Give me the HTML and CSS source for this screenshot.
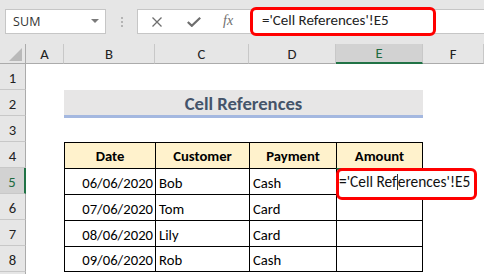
FILE: index.html
```html
<!DOCTYPE html>
<html>
<head>
<meta charset="utf-8">
<link rel="stylesheet" href="styles.css">
</head>
<body>
<div class="app">
  <div class="toolbar">
    <div class="namebox">
      <span class="name">SUM</span>
      <span class="dropdown"></span>
    </div>
    <div class="grip"><i></i><i></i><i></i></div>
    <div class="fbar">
      <div class="fbtns">
        <svg class="ic" width="12" height="10" viewBox="0 0 12 10"><path d="M1.5 0.5 L10.5 9.5 M10.5 0.5 L1.5 9.5" stroke="#6e6e6e" stroke-width="1.3" fill="none"/></svg>
        <svg class="ic" width="14" height="10" viewBox="0 0 14 10"><path d="M0.8 5 L4.8 8.8 L13.2 0.8" stroke="#6e6e6e" stroke-width="2.2" fill="none"/></svg>
        <span class="fx">fx</span>
      </div>
      <div class="finput"><span class="ftext">='Cell References'!E5</span></div>
    </div>
  </div>
  <div class="sheet">
    <div class="corner"><span class="tri"></span></div>
    <div class="ch">A</div><div class="ch">B</div><div class="ch">C</div><div class="ch">D</div><div class="ch sel">E</div><div class="ch">F</div>

    <div class="rh">1</div><div></div><div></div><div></div><div></div><div></div><div></div>

    <div class="rh">2</div><div></div><div class="title">Cell References</div><div></div>

    <div class="rh">3</div><div></div><div></div><div></div><div></div><div></div><div></div>

    <div class="rh">4</div><div></div>
    <div class="tc th first">Date</div><div class="tc th">Customer</div><div class="tc th">Payment</div><div class="tc th last">Amount</div><div></div>

    <div class="rh sel">5</div><div></div>
    <div class="tc num first">06/06/2020</div><div class="tc">Bob</div><div class="tc">Cash</div>
    <div class="tc last active"><span class="edit">='Cell Ref<span class="caret"></span>erences'!E5</span></div><div></div>

    <div class="rh">6</div><div></div>
    <div class="tc num first">07/06/2020</div><div class="tc">Tom</div><div class="tc">Card</div><div class="tc last"></div><div></div>

    <div class="rh">7</div><div></div>
    <div class="tc num first">08/06/2020</div><div class="tc">Lily</div><div class="tc">Card</div><div class="tc last"></div><div></div>

    <div class="rh">8</div><div></div>
    <div class="tc num first bot">09/06/2020</div><div class="tc bot">Rob</div><div class="tc bot">Cash</div><div class="tc last bot"></div><div></div>

    <div class="rh"></div><div></div><div></div><div></div><div></div><div></div><div></div>
  </div>
</div>
</body>
</html>
```
FILE: styles.css
```css
* { box-sizing: border-box; }
html, body { margin: 0; padding: 0; }
body {
  width: 484px;
  height: 274px;
  overflow: hidden;
  background: #ffffff;
  font-family: Carlito, Calibri, Lato, sans-serif;
  font-size: 14.67px;
  color: #000;
}
.app { width: 484px; height: 274px; overflow: hidden; }

.toolbar {
  height: 44px;
  background: #e6e6e6;
  display: flex;
  align-items: flex-start;
  padding: 9px 0 0 5px;
}
.namebox {
  width: 101px;
  height: 25px;
  background: #fff;
  border: 1px solid #c6c6c6;
  display: flex;
  align-items: center;
  justify-content: space-between;
  padding: 0 6px 0 7px;
}
.name {
  font-family: "Open Sans", "Noto Sans", sans-serif;
  font-size: 12.5px;
  color: #333;
  letter-spacing: 0.1px;
}
.dropdown {
  width: 0; height: 0;
  border-left: 4px solid transparent;
  border-right: 4px solid transparent;
  border-top: 4px solid #7a7a7a;
  margin-top: -1px;
}
.grip {
  width: 31px;
  height: 25px;
  display: flex;
  flex-direction: column;
  align-items: center;
  justify-content: center;
  gap: 2px;
}
.grip i {
  display: block;
  width: 2px; height: 2px;
  background: #b4b4b4;
}
.fbar {
  flex: 1;
  height: 25px;
  background: #fff;
  border: 1px solid #c6c6c6;
  border-right: none;
  display: flex;
  align-items: center;
}
.fbtns {
  width: 112px;
  display: flex;
  align-items: center;
  padding-left: 13px;
  gap: 0;
}
.fbtns .ic { display: block; }
.fbtns .ic:nth-child(1) { margin-right: 24px; }
.fbtns .ic:nth-child(2) { margin-right: 22px; }
.fx {
  font-family: "Liberation Serif", serif;
  font-style: italic;
  font-size: 14px;
  color: #6e6e6e;
  margin-top: -2px;
}
.finput {
  flex: 1;
  height: 25px;
  position: relative;
}
.ftext {
  position: absolute;
  left: 0;
  top: -2px;
  width: 186px;
  height: 29px;
  border: 3.5px solid #ff0000;
  border-radius: 6px;
  padding-left: 9px;
  line-height: 21px;
  font-size: 15px;
  color: #222;
  white-space: nowrap;
}

.sheet {
  display: grid;
  grid-template-columns: 26px 38px 91px 94px 87px 87px 61px;
  grid-template-rows: 20px repeat(9, 26px);
}
.corner {
  background: #e6e6e6;
  border-right: 1px solid #ababab;
  border-bottom: 1px solid #ababab;
  position: relative;
}
.tri {
  position: absolute;
  right: 3px;
  bottom: 2px;
  width: 0; height: 0;
  border-left: 13px solid transparent;
  border-bottom: 13px solid #b9b9b9;
}
.ch {
  background: #e6e6e6;
  border-bottom: 1px solid #ababab;
  border-right: 1px solid #c8c8c8;
  display: flex;
  align-items: center;
  justify-content: center;
  font-size: 14.67px;
  color: #222;
}
.ch.sel {
  background: #d2d2d2;
  border-bottom: 2px solid #217346;
  color: #1e6b40;
}
.rh {
  background: #e6e6e6;
  border-right: 1px solid #ababab;
  border-bottom: 1px solid #c8c8c8;
  display: flex;
  align-items: flex-end;
  justify-content: center;
  padding-bottom: 2px;
  line-height: 18px;
  color: #222;
}
.rh.sel {
  background: #d2d2d2;
  border-right: 2px solid #217346;
  color: #1e6b40;
}
.title {
  grid-column: span 4;
  background: #e7e6e6;
  border-bottom: 1px solid #a4b8e0;
  box-shadow: 0 2px 0 #a4b8e0;
  display: flex;
  align-items: center;
  justify-content: center;
  font-weight: bold;
  font-size: 18.67px;
  color: #44546a;
  padding-top: 1px;
  position: relative;
  z-index: 1;
}
.tc {
  border-top: 1px solid #000;
  border-left: 1px solid #000;
  display: flex;
  align-items: flex-end;
  padding: 0 2px 2px 3px;
  line-height: 18px;
  white-space: nowrap;
}
.tc.last { border-right: 1px solid #000; }
.tc.bot { border-bottom: 1px solid #000; }
.tc.num { justify-content: flex-end; }
.th {
  background: #fff2cc;
  font-weight: bold;
  justify-content: center;
  align-items: center;
  padding: 1px 0 0 0;
}
.active {
  position: relative;
  overflow: visible;
  border-top: 2px solid #217346;
}
.edit {
  position: absolute;
  left: -1px;
  top: -2px;
  width: 141px;
  height: 32px;
  border: 3.5px solid #ff0000;
  border-radius: 6px;
  background: #fff;
  padding-left: 0;
  line-height: 22px;
  font-size: 15.4px;
  color: #111;
  white-space: nowrap;
  z-index: 2;
}
.caret {
  display: inline-block;
  width: 0;
  height: 16px;
  border-left: 1px solid #333;
  vertical-align: -3px;
}
```
